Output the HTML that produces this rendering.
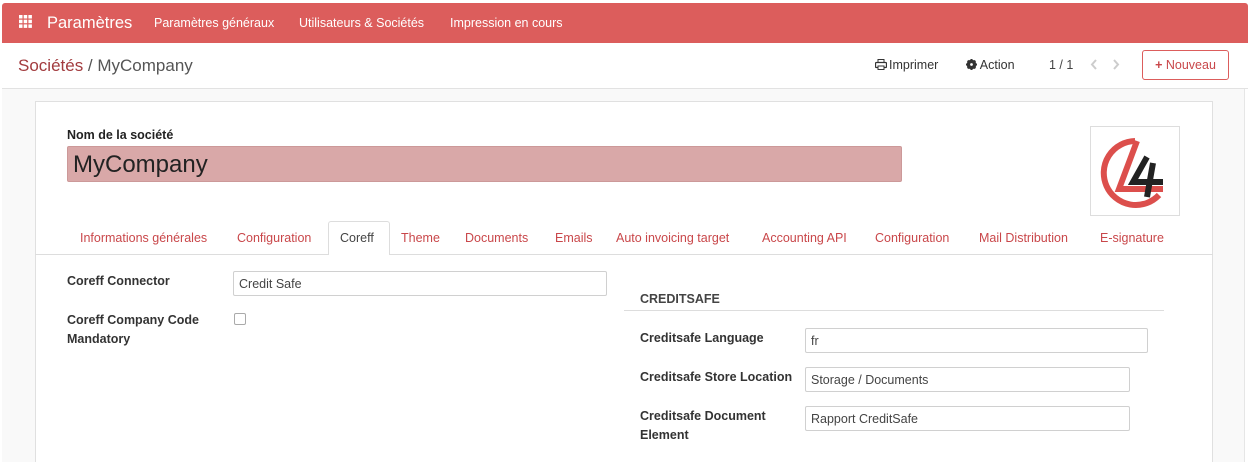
<!DOCTYPE html>
<html><head><meta charset="utf-8"><style>
*{box-sizing:border-box;margin:0;padding:0}
html,body{width:1250px;height:462px;overflow:hidden}
body{background:#fff;font-family:"Liberation Sans",sans-serif;font-size:13px;color:#212529;position:relative}
.a{position:absolute;white-space:nowrap}
.nav{position:absolute;left:2px;top:3px;width:1246px;height:40px;background:#dc5d5c;border-radius:3px 3px 0 0;color:#fff}
.cp{position:absolute;left:2px;top:43px;width:1246px;height:46px;background:#fff;border-bottom:1px solid #e2e2e2}
.bg{position:absolute;left:2px;top:89px;width:1243px;height:373px;background:#f9f9f9;border-right:1px solid #e6e6e6}
.sheet{position:absolute;left:35px;top:101px;width:1178px;height:361px;background:#fff;border:1px solid #e0e0e0;border-bottom:none}
.tab{position:absolute;top:231px;color:#c9474a;font-size:12.5px}
.inp{position:absolute;height:25px;border:1px solid #d0d0d0;border-radius:2px;padding:5px 5px;font-size:12.5px;color:#444}
.lbl{position:absolute;font-weight:bold;font-size:12.5px;color:#333;line-height:19px}
</style></head><body>
<div class="nav">
  <svg class="a" style="left:17px;top:12px" width="13" height="13" viewBox="0 0 13 13" fill="#fff"><rect x="0" y="0" width="3.5" height="3.5"/><rect x="4.7" y="0" width="3.5" height="3.5"/><rect x="9.4" y="0" width="3.5" height="3.5"/><rect x="0" y="4.7" width="3.5" height="3.5"/><rect x="4.7" y="4.7" width="3.5" height="3.5"/><rect x="9.4" y="4.7" width="3.5" height="3.5"/><rect x="0" y="9.4" width="3.5" height="3.5"/><rect x="4.7" y="9.4" width="3.5" height="3.5"/><rect x="9.4" y="9.4" width="3.5" height="3.5"/></svg>
  <div class="a" style="left:45px;top:11px;font-size:16.5px">Paramètres</div>
  <div class="a" style="left:152px;top:13px;font-size:12.5px">Paramètres généraux</div>
  <div class="a" style="left:297px;top:13px;font-size:12.5px">Utilisateurs &amp; Sociétés</div>
  <div class="a" style="left:448px;top:13px;font-size:12.5px">Impression en cours</div>
</div>
<div class="cp">
  <div class="a" style="left:16px;top:13px;font-size:17px;color:#555"><span style="color:#a23b3e">Sociétés</span> / MyCompany</div>
  <div class="a" style="left:873px;top:15px;font-size:12.5px;color:#333">
    <svg width="12" height="11" viewBox="0 0 12 11" style="vertical-align:-1px;margin-right:2px"><rect x="3" y="0.5" width="6" height="3" fill="none" stroke="#333"/><rect x="0.5" y="3.5" width="11" height="5" rx="1" fill="none" stroke="#333" stroke-width="1.3"/><rect x="3" y="7" width="6" height="3.5" fill="#fff" stroke="#333"/></svg>Imprimer</div>
  <div class="a" style="left:964px;top:15px;font-size:12.5px;color:#333">
    <svg width="11" height="11" viewBox="0 0 12 12" style="vertical-align:-1px"><circle cx="6" cy="6" r="4" fill="none" stroke="#333" stroke-width="2.6"/><g stroke="#333" stroke-width="2.2"><line x1="6" y1="0" x2="6" y2="12"/><line x1="0" y1="6" x2="12" y2="6"/><line x1="1.8" y1="1.8" x2="10.2" y2="10.2"/><line x1="10.2" y1="1.8" x2="1.8" y2="10.2"/></g><circle cx="6" cy="6" r="1.5" fill="#fff"/></svg> Action</div>
  <div class="a" style="left:1047px;top:15px;font-size:12.5px;color:#444">1 / 1</div>
  <svg class="a" style="left:1088px;top:16px" width="8" height="11" viewBox="0 0 8 11"><path d="M6 1 L2 5.5 L6 10" fill="none" stroke="#ccc" stroke-width="2"/></svg>
  <svg class="a" style="left:1110px;top:16px" width="8" height="11" viewBox="0 0 8 11"><path d="M2 1 L6 5.5 L2 10" fill="none" stroke="#ccc" stroke-width="2"/></svg>
  <div class="a" style="left:1140px;top:7px;width:87px;height:30px;border:1px solid #dc5d5c;border-radius:3px;color:#c9474a;font-size:12.5px;padding-top:7px;text-align:center"><b>+</b> Nouveau</div>
</div>
<div class="bg"></div>
<div class="sheet"></div>
<div class="a" style="left:67px;top:128px;font-size:12.5px;font-weight:bold;color:#222">Nom de la société</div>
<div class="a" style="left:67px;top:146px;width:835px;height:36px;background:#d9a8a8;border:1px solid #c99;border-radius:2px;font-size:24px;padding:4px 5px;color:#222">MyCompany</div>
<div class="a" style="left:1090px;top:126px;width:90px;height:90px;border:1px solid #ddd;background:#fff">
<svg width="88" height="88" viewBox="0 0 88 88"><path d="M44 14 A32 32 0 1 0 68 68" fill="none" stroke="#dc4f4c" stroke-width="6"/><path d="M46 14 L28 62 L72 62" fill="none" stroke="#dc4f4c" stroke-width="6"/><path d="M56 30 L42 55 L72 55 M62 36 L56 70" fill="none" stroke="#222" stroke-width="6"/></svg></div>
<div class="a" style="left:35px;top:254px;width:1178px;height:1px;background:#ddd"></div>
<div class="a" style="left:328px;top:221px;width:62px;height:34px;background:#fff;border:1px solid #ddd;border-bottom:none;border-radius:3px 3px 0 0"></div>
<div class="tab" style="left:80px">Informations générales</div>
<div class="tab" style="left:237px">Configuration</div>
<div class="tab" style="left:340px;color:#444">Coreff</div>
<div class="tab" style="left:401px">Theme</div>
<div class="tab" style="left:465px">Documents</div>
<div class="tab" style="left:555px">Emails</div>
<div class="tab" style="left:616px">Auto invoicing target</div>
<div class="tab" style="left:762px">Accounting API</div>
<div class="tab" style="left:875px">Configuration</div>
<div class="tab" style="left:979px">Mail Distribution</div>
<div class="tab" style="left:1100px">E-signature</div>
<div class="lbl" style="left:67px;top:272px">Coreff Connector</div>
<div class="inp" style="left:233px;top:271px;width:374px">Credit Safe</div>
<div class="lbl" style="left:67px;top:311px">Coreff Company Code<br>Mandatory</div>
<div class="a" style="left:234px;top:313px;width:12px;height:12px;border:1px solid #aaa;border-radius:2px"></div>
<div class="a" style="left:640px;top:292px;font-weight:bold;font-size:12.5px;color:#444">CREDITSAFE</div>
<div class="a" style="left:624px;top:310px;width:540px;height:1px;background:#ddd"></div>
<div class="lbl" style="left:640px;top:329px">Creditsafe Language</div>
<div class="inp" style="left:805px;top:328px;width:343px">fr</div>
<div class="lbl" style="left:640px;top:368px">Creditsafe Store Location</div>
<div class="inp" style="left:805px;top:367px;width:325px">Storage / Documents</div>
<div class="lbl" style="left:640px;top:407px">Creditsafe Document<br>Element</div>
<div class="inp" style="left:805px;top:406px;width:325px">Rapport CreditSafe</div>
</body></html>
